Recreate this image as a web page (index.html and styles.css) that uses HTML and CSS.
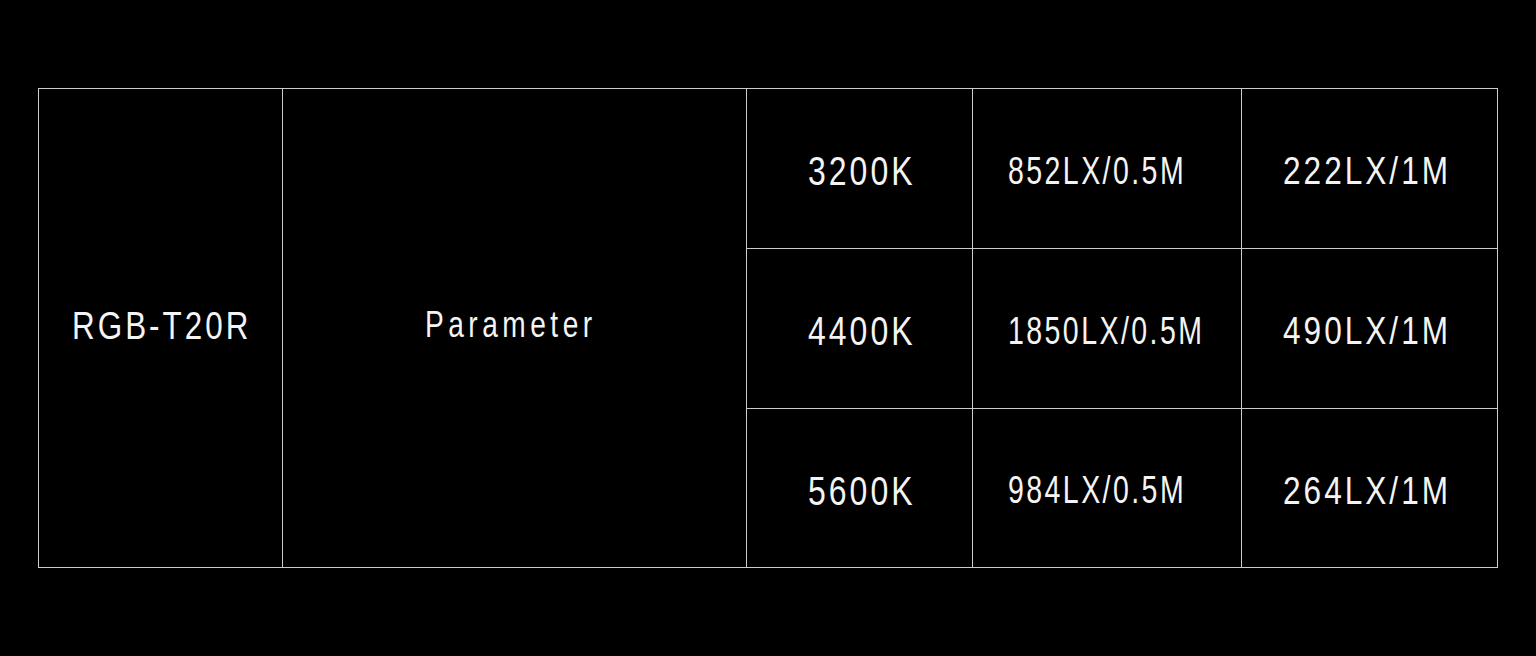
FILE: index.html
```html
<!DOCTYPE html>
<html>
<head>
<meta charset="utf-8">
<link rel="stylesheet" href="styles.css">
</head>
<body>
<div class="spec">
  <div class="cell model"><span class="t">RGB-T20R</span></div>
  <div class="cell param"><span class="t">Parameter</span></div>
  <div class="cell temp"><span class="t">3200K</span></div>
  <div class="cell lux1"><span class="t">852LX/0.5M</span></div>
  <div class="cell lux2"><span class="t">222LX/1M</span></div>
  <div class="cell temp"><span class="t">4400K</span></div>
  <div class="cell lux1"><span class="t">1850LX/0.5M</span></div>
  <div class="cell lux2"><span class="t">490LX/1M</span></div>
  <div class="cell temp"><span class="t">5600K</span></div>
  <div class="cell lux1"><span class="t">984LX/0.5M</span></div>
  <div class="cell lux2"><span class="t">264LX/1M</span></div>
</div>
</body>
</html>
```

FILE: styles.css
```css
html, body {
  margin: 0;
  padding: 0;
  background: #000;
}
body {
  width: 1536px;
  height: 656px;
  overflow: hidden;
  font-family: "Liberation Sans", Arial, sans-serif;
  color: #f4f4f4;
}
.spec {
  display: grid;
  grid-template-columns: 243px 463px 225px 268px 255px;
  grid-template-rows: 159px 159px 158px;
  gap: 1px;
  padding: 1px;
  background: #cccccc;
  width: max-content;
  margin: 88px 0 0 38px;
}
.cell {
  background: #000;
  display: flex;
  align-items: center;
  white-space: nowrap;
  box-sizing: border-box;
  padding-top: 5px;
}
.t {
  display: inline-block;
  transform-origin: left center;
  transform: scaleX(var(--s));
  line-height: 1.15;
}
.model {
  grid-row: 1 / 4;
  padding-top: 0;
  padding-bottom: 5px;
  padding-left: 33px;
  font-size: 39.5px;
  letter-spacing: 3.8px;
  --s: 0.795;
}
.param {
  grid-row: 1 / 4;
  padding-top: 0;
  padding-bottom: 5px;
  padding-left: 142px;
  font-size: 37px;
  letter-spacing: 5.9px;
  --s: 0.76;
}
.temp {
  padding-left: 61px;
  font-size: 40px;
  letter-spacing: 3.75px;
  --s: 0.8;
}
.lux1 {
  padding-left: 35px;
  font-size: 38.5px;
  letter-spacing: 3.3px;
  --s: 0.74;
}
.lux2 {
  padding-left: 41px;
  font-size: 39.5px;
  letter-spacing: 3.75px;
  --s: 0.8;
}
```
